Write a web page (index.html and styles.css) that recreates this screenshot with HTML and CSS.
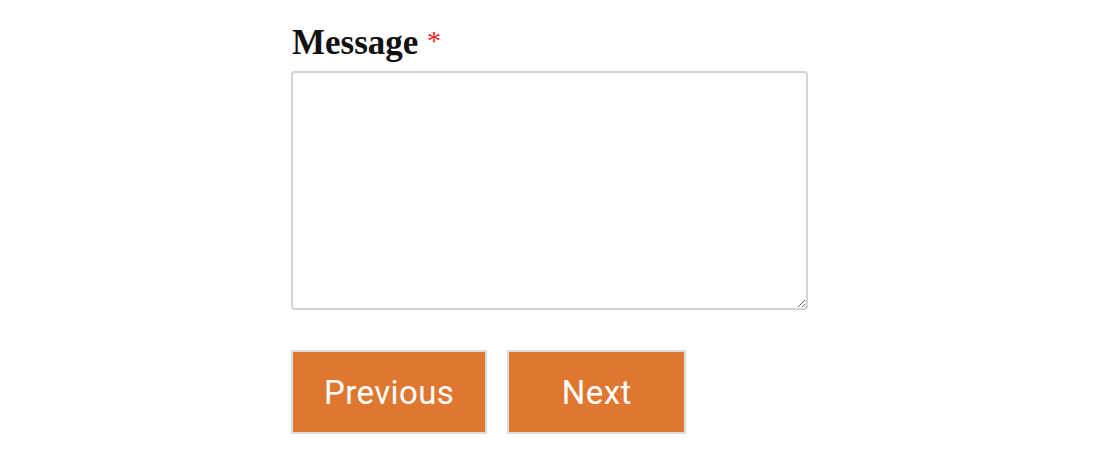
FILE: index.html
```html
<!DOCTYPE html>
<html>

    <head>
        <title>Message</title>
        <link rel="stylesheet" href="styles.css">
    </head>

    <body>
        <form class="formulario">
            <div class="campo">
                <label for="mensaje" class="etiqueta">Message <span class="requerido">*</span></label>
                <textarea id="mensaje" class="area-texto"></textarea>
            </div>
            <div class="botones">
                <button type="button" class="boton">Previous</button>
                <button type="button" class="boton">Next</button>
            </div>
        </form>
    </body>

</html>
```

FILE: styles.css
```css
html,
body {
    margin: 0;
    padding: 0;
    background-color: #fff;
}

.formulario {
    width: 518px;
    margin: 0 0 0 291px;
    padding-top: 21px;
}

.campo {
    display: flex;
    flex-direction: column;
}

.etiqueta {
    font-family: "Liberation Serif", serif;
    font-weight: bold;
    font-size: 35px;
    line-height: 40px;
    color: #111;
    margin-bottom: 8px;
    padding-left: 1px;
}

.requerido {
    color: #f0241a;
    font-weight: normal;
    font-size: 28px;
    vertical-align: 4px;
}

.area-texto {
    box-sizing: border-box;
    width: 517px;
    height: 239px;
    border: 2px solid #d4d4d4;
    border-radius: 4px;
    background-color: #fff;
    margin: 0;
}

.botones {
    display: flex;
    gap: 20px;
    margin-top: 40px;
}

.boton {
    box-sizing: border-box;
    min-width: 179px;
    height: 84px;
    padding: 0 31px;
    background-color: #e07731;
    color: #fff;
    border: 2px solid #dcdcdc;
    border-radius: 0;
    font-family: Roboto, sans-serif;
    font-size: 33px;
    letter-spacing: 0.4px;
    cursor: pointer;
}
```
